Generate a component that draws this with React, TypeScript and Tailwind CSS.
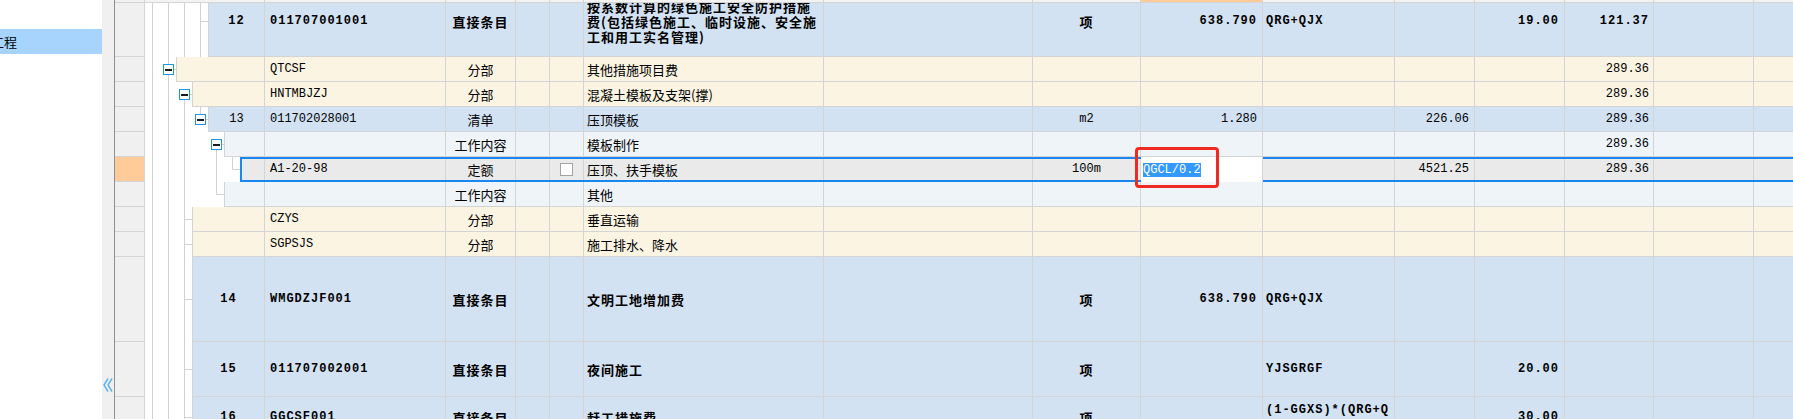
import React from 'react';
import clsx from 'clsx';

const MONO = "[font-family:'Liberation_Mono',monospace] text-[12px]";
const CN = "[font-family:'Noto_Sans_CJK_SC',sans-serif] text-[13px]";

const BLUE = 'bg-[#d2e2f3]';
const CREAM = 'bg-[#fbf4e2]';
const LIGHT = 'bg-[#eff4f9]';
const SEL = 'bg-[#eaeaea]';

const H: Record<number, string> = {
  54: 'h-[54px]',
  25: 'h-[25px]',
  85: 'h-[85px]',
  55: 'h-[55px]',
  42: 'h-[42px]',
};

type Tree = { full: number[]; top?: number[]; bottom?: number[]; tick?: number; box?: number };

type Row = {
  height: number;
  level: number;
  bg: string;
  bold?: boolean;
  shift?: boolean;
  selected?: boolean;
  seq?: string;
  code?: string;
  type?: string;
  check?: boolean;
  name?: string[];
  unit?: string;
  qty?: string;
  edit?: string;
  formula?: string[];
  c1?: string;
  c2?: string;
  c3?: string;
  tree: Tree;
};

const TAIL: Tree = { full: [0, 1, 2], tick: 2 };

const ROWS: Row[] = [
  {
    height: 54, level: 3, bg: BLUE, bold: true, shift: true,
    seq: '12', code: '011707001001', type: '直接条目',
    name: ['按系数计算的绿色施工安全防护措施', '费(包括绿色施工、临时设施、安全施', '工和用工实名管理)'],
    unit: '项', qty: '638.790', formula: ['QRG+QJX'], c2: '19.00', c3: '121.37',
    tree: { full: [0, 1, 2, 3], tick: 3 },
  },
  { height: 25, level: 1, bg: CREAM, code: 'QTCSF', type: '分部', name: ['其他措施项目费'], c3: '289.36', tree: { full: [0, 1], box: 1 } },
  { height: 25, level: 2, bg: CREAM, code: 'HNTMBJZJ', type: '分部', name: ['混凝土模板及支架(撑)'], c3: '289.36', tree: { full: [0, 1], bottom: [2], box: 2 } },
  {
    height: 25, level: 3, bg: BLUE, seq: '13', code: '011702028001', type: '清单', name: ['压顶模板'],
    unit: 'm2', qty: '1.280', c1: '226.06', c3: '289.36', tree: { full: [0, 1, 2], top: [3], box: 3 },
  },
  { height: 25, level: 4, bg: LIGHT, type: '工作内容', name: ['模板制作'], c3: '289.36', tree: { full: [0, 1, 2], bottom: [4], box: 4 } },
  {
    height: 25, level: 5, bg: SEL, selected: true, code: 'A1-20-98', type: '定额', check: true, name: ['压顶、扶手模板'],
    unit: '100m', edit: 'QGCL/0.2', c1: '4521.25', c3: '289.36', tree: { full: [0, 1, 2, 4], top: [5], tick: 5 },
  },
  { height: 25, level: 4, bg: LIGHT, type: '工作内容', name: ['其他'], tree: { full: [0, 1, 2], top: [4], tick: 4 } },
  { height: 25, level: 2, bg: CREAM, code: 'CZYS', type: '分部', name: ['垂直运输'], tree: TAIL },
  { height: 25, level: 2, bg: CREAM, code: 'SGPSJS', type: '分部', name: ['施工排水、降水'], tree: TAIL },
  {
    height: 85, level: 2, bg: BLUE, bold: true, seq: '14', code: 'WMGDZJF001', type: '直接条目', name: ['文明工地增加费'],
    unit: '项', qty: '638.790', formula: ['QRG+QJX'], tree: TAIL,
  },
  {
    height: 55, level: 2, bg: BLUE, bold: true, seq: '15', code: '011707002001', type: '直接条目', name: ['夜间施工'],
    unit: '项', formula: ['YJSGRGF'], c2: '20.00', tree: TAIL,
  },
  {
    height: 42, level: 2, bg: BLUE, bold: true, seq: '16', code: 'GGCSF001', type: '直接条目', name: ['赶工措施费'],
    unit: '项', formula: ['(1-GGXS)*(QRG+Q', 'JX)'], c2: '30.00', tree: TAIL,
  },
];

function T({ s, bold }: { s: string; bold?: boolean }) {
  const cjk = /[\u3000-\u9fff]/.test(s);
  return (
    <span className={clsx('whitespace-nowrap leading-[15px] text-black', cjk ? CN : MONO, bold && 'font-bold tracking-[1px]')}>
      {s}
    </span>
  );
}

function TreeLines({ row }: { row: Row }) {
  const w = 15 + 16 * row.level;
  const h = row.height;
  const c = Math.floor((h - 1 - (row.shift ? 16 : 0)) / 2) + 0.5;
  const lx = (k: number) => 7.5 + 16 * k;
  const { full, top = [], bottom = [], tick, box } = row.tree;
  const stroke = '#d2d2d2';
  return (
    <svg width={w} height={h} className="block shrink-0">
      {full.map((k) => (
        <line key={'f' + k} x1={lx(k)} x2={lx(k)} y1={0} y2={h} stroke={stroke} />
      ))}
      {top.map((k) => (
        <line key={'t' + k} x1={lx(k)} x2={lx(k)} y1={0} y2={c} stroke={stroke} />
      ))}
      {bottom.map((k) => (
        <line key={'b' + k} x1={lx(k)} x2={lx(k)} y1={c} y2={h} stroke={stroke} />
      ))}
      {tick !== undefined && <line x1={lx(tick)} x2={w} y1={c} y2={c} stroke={stroke} />}
      {box !== undefined && (
        <g>
          <line x1={lx(box)} x2={w} y1={c} y2={c} stroke={stroke} />
          <rect x={lx(box) - 5} y={c - 5} width={10} height={10} fill="#fff" stroke="#1e96e4" />
          <rect x={lx(box) - 3.5} y={c - 0.5} width={7} height={2} fill="#1a1a1a" />
        </g>
      )}
    </svg>
  );
}

function Lines({ lines, bold }: { lines?: string[]; bold?: boolean }) {
  if (!lines) return null;
  return (
    <div className="flex flex-col">
      {lines.map((l, i) => (
        <T key={i} s={l} bold={bold} />
      ))}
    </div>
  );
}

function GridRow({ row }: { row: Row }) {
  const pad = row.shift ? 'pb-[16px]' : '';
  const cell = clsx('flex shrink-0 items-center overflow-hidden border-r border-[#d4d4d4]', pad);
  const b = row.bold;
  return (
    <div className={clsx('flex shrink-0', H[row.height])}>
      <div className={clsx('w-[30px] shrink-0 border-b border-r border-[#d4d4d4]', row.selected ? 'bg-[#ffcc99]' : 'bg-[#f0f0f0]')} />
      <TreeLines row={row} />
      <div
        className={clsx(
          'flex flex-1',
          row.bg,
          row.selected ? 'border-y-2 border-l-2 border-[#1a86f2]' : 'border-b border-l border-[#d4d4d4]'
        )}
      >
        <div className={clsx('flex flex-1 items-center justify-center overflow-hidden border-r border-[#d4d4d4]', pad)}>
          {row.seq && <T s={row.seq} bold={b} />}
        </div>
        <div className={clsx(cell, 'w-[181px] pl-[5px]')}>{row.code && <T s={row.code} bold={b} />}</div>
        <div className={clsx(cell, 'w-[70px] justify-center')}>{row.type && <T s={row.type} bold={b} />}</div>
        <div className={clsx(cell, 'w-[34px]')} />
        <div className={clsx(cell, 'w-[34px] justify-center')}>
          {row.check && <div className="h-[13px] w-[13px] border border-[#a3a3a3] bg-white" />}
        </div>
        <div className={clsx(cell, 'w-[240px] pl-[3px]')}>
          <Lines lines={row.name} bold={b} />
        </div>
        <div className={clsx(cell, 'w-[209px]')} />
        <div className={clsx(cell, 'w-[108px] justify-center')}>{row.unit && <T s={row.unit} bold={b} />}</div>
        {row.edit ? (
          <div className="relative z-10 -my-[2px] flex h-[25px] w-[122px] shrink-0 items-center border-r border-[#d4d4d4] bg-white pl-[2px]">
            <span className={clsx(MONO, 'whitespace-nowrap bg-[#3399ff] leading-[14px] text-white')}>{row.edit}</span>
            <div className="absolute left-[-6px] top-[-10px] h-[41px] w-[84px] rounded-[4px] border-[3px] border-[#ee2a22]" />
          </div>
        ) : (
          <div className={clsx(cell, 'w-[122px] justify-end pr-[5px]')}>{row.qty && <T s={row.qty} bold={b} />}</div>
        )}
        <div className={clsx(cell, 'w-[132px] pl-[3px]')}>
          <Lines lines={row.formula} bold={b} />
        </div>
        <div className={clsx(cell, 'w-[80px] justify-end pr-[5px]')}>{row.c1 && <T s={row.c1} bold={b} />}</div>
        <div className={clsx(cell, 'w-[90px] justify-end pr-[5px]')}>{row.c2 && <T s={row.c2} bold={b} />}</div>
        <div className={clsx(cell, 'w-[89px] justify-end pr-[4px]')}>{row.c3 && <T s={row.c3} bold={b} />}</div>
        <div className={clsx(cell, 'w-[100px]')} />
        <div className="w-[39px] shrink-0" />
      </div>
    </div>
  );
}

function HeaderStrip() {
  const c = 'shrink-0 border-r border-[#d4d4d4]';
  return (
    <div className="flex h-[3px] shrink-0">
      <div className="w-[30px] shrink-0 border-b border-r border-[#d4d4d4] bg-[#f0f0f0]" />
      <div className="flex flex-1 border-b border-[#d4d4d4] bg-[#f3f3f3]">
        <div className="flex-1 border-r border-[#d4d4d4]" />
        <div className={clsx(c, 'w-[181px]')} />
        <div className={clsx(c, 'w-[70px]')} />
        <div className={clsx(c, 'w-[34px]')} />
        <div className={clsx(c, 'w-[34px]')} />
        <div className={clsx(c, 'w-[240px]')} />
        <div className={clsx(c, 'w-[209px]')} />
        <div className={clsx(c, 'w-[108px]')} />
        <div className={clsx(c, 'w-[122px] bg-[#ffcc99]')} />
        <div className={clsx(c, 'w-[132px]')} />
        <div className={clsx(c, 'w-[80px]')} />
        <div className={clsx(c, 'w-[90px]')} />
        <div className={clsx(c, 'w-[89px]')} />
        <div className={clsx(c, 'w-[100px]')} />
        <div className="w-[39px] shrink-0" />
      </div>
    </div>
  );
}

export default function App() {
  return (
    <div className="flex h-[419px] w-[1793px] overflow-hidden bg-white">
      {/* project tree panel, scrolled sideways */}
      <div className="w-[102px] shrink-0 bg-white pt-[29px]">
        <div className="flex h-[25px] items-center overflow-hidden bg-[#a6d4fd]">
          <span className={clsx(CN, '-ml-[9px] whitespace-nowrap leading-[15px] text-black')}>工程</span>
        </div>
      </div>

      <div className="flex w-[12px] shrink-0 justify-center bg-[#f0f0f0] pt-[377px]">
        <svg width="10" height="16" viewBox="0 0 10 16" className="block">
          <polyline points="5,1.5 1,8 5,14.5" fill="none" stroke="#62b4ee" strokeWidth="1.5" />
          <polyline points="9,1.5 5,8 9,14.5" fill="none" stroke="#62b4ee" strokeWidth="1.5" />
        </svg>
      </div>
      <div className="w-[1px] shrink-0 bg-[#8d9196]" />

      <div className="flex flex-1 flex-col">
        <HeaderStrip />
        {ROWS.map((r, i) => (
          <GridRow key={i} row={r} />
        ))}
      </div>
    </div>
  );
}
